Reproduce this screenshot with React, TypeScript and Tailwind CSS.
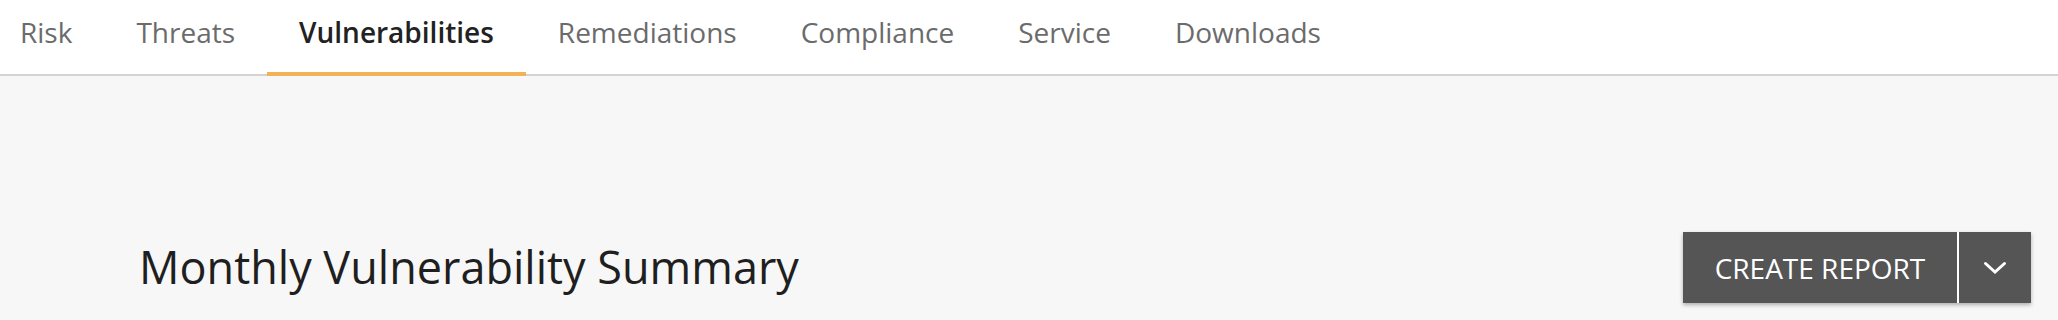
import React from "react";

const tabs = ["Risk", "Threats", "Vulnerabilities", "Remediations", "Compliance", "Service", "Downloads"];

export default function App() {
  return (
    <div className="w-[2058px] h-[320px] overflow-hidden bg-[#f7f7f7]" style={{ fontFamily: '"Open Sans", "Noto Sans", sans-serif' }}>
      <nav className="flex h-[76px] bg-white border-b-2 border-[#d3d3d3]">
        {tabs.map((t, i) => {
          const active = t === "Vulnerabilities";
          return (
            <div
              key={t}
              className={`flex items-center h-[76px] -mb-[2px] pb-[8px] border-b-4 text-[28px] leading-none ${i === 0 ? "pl-[20px] pr-[32px]" : "px-[32px]"} ${active ? "border-[#f2b256] text-[#222222] font-semibold" : "border-transparent text-[#6b6b6b]"}`}
            >
              {t}
            </div>
          );
        })}
      </nav>
      <div className="flex items-center justify-between pl-[139px] pr-[27px] pt-[156px]">
        <h1 className="text-[45px] leading-none font-medium text-[#1f1f1f] -mt-[2px]">Monthly Vulnerability Summary</h1>
        <div className="flex h-[71px] shadow-[0_2px_4px_rgba(0,0,0,0.3)]">
          <button className="h-full w-[274px] bg-[#555555] text-white text-[28px] flex items-center justify-center">CREATE REPORT</button>
          <div className="w-[2px] bg-white" />
          <button className="h-full w-[72px] bg-[#555555] flex items-center justify-center">
            <svg width="24" height="14" viewBox="0 0 24 14" fill="none">
              <path d="M2.5 2.5 L12 11 L21.5 2.5" stroke="white" strokeWidth="3" strokeLinecap="round" strokeLinejoin="miter" />
            </svg>
          </button>
        </div>
      </div>
    </div>
  );
}
